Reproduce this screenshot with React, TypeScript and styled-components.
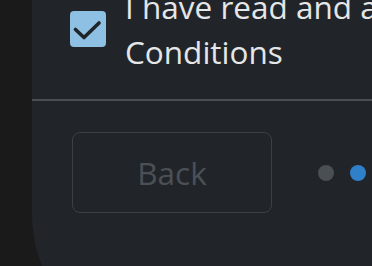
import styled, { createGlobalStyle } from "styled-components";
import { useState } from "react";

const Global = createGlobalStyle`
    html, body {
        margin: 0;
        background: #1a1a1a;
        overflow: hidden;
        font-family: "Open Sans", "Noto Sans", sans-serif;
    }
`

const Page = styled.div`
    padding-left: 32px;
    height: 266px;
    overflow: hidden;
`

const Panel = styled.div`
    width: 720px;
    height: 390px;
    margin-top: -40px;
    padding-top: 24px;
    box-sizing: border-box;
    background: #212529;
    border-bottom-left-radius: 135px;
`

const AgreeRow = styled.label`
    display: flex;
    align-items: center;
    gap: 19px;
    padding-left: 38px;
    cursor: pointer;
`

const Box = styled.span<{ $checked: boolean }>`
    flex: none;
    width: 36px;
    height: 36px;
    border-radius: 4px;
    background: ${p => p.$checked ? "#8ec0e4" : "transparent"};
    border: ${p => p.$checked ? "none" : "2px solid #8ec0e4"};
    box-sizing: border-box;
    display: flex;
    align-items: center;
    justify-content: center;
`

const AgreeText = styled.span`
    width: 580px;
    font-size: 31.5px;
    line-height: 45px;
    color: #e4e6e8;
`

const Divider = styled.hr`
    margin: 25px 0 0;
    border: none;
    height: 2px;
    background: #4a4f54;
`

const Footer = styled.div`
    display: flex;
    align-items: center;
    padding: 31px 0 0 40px;
`

const BackButton = styled.button`
    width: 200px;
    height: 81px;
    box-sizing: border-box;
    border: 1px solid #3b4046;
    border-radius: 8px;
    background: transparent;
    color: #4b5056;
    font-family: inherit;
    font-size: 31.5px;
    padding: 0;
`

const Dots = styled.div`
    display: flex;
    gap: 16px;
    margin-left: 46px;
`

const Dot = styled.span<{ $active?: boolean }>`
    width: 16px;
    height: 16px;
    border-radius: 50%;
    background: ${p => p.$active ? "#2f7fc9" : "#4a4f54"};
`

export default function App() {
    const [checked, setChecked] = useState(true)

    return (
        <Page>
            <Global />
            <Panel>
                <AgreeRow onClick={() => setChecked(!checked)}>
                    <Box $checked={checked}>
                        {checked &&
                            <svg width="36" height="36" viewBox="0 0 36 36">
                                <path d="M5.5 18.5 L14 26.5 L29 12" fill="none" stroke="#1f2428"
                                      strokeWidth="3.6" strokeLinecap="round" strokeLinejoin="round" />
                            </svg>
                        }
                    </Box>
                    <AgreeText>I have read and agree to the Terms and Conditions</AgreeText>
                </AgreeRow>
                <Divider />
                <Footer>
                    <BackButton disabled>Back</BackButton>
                    <Dots>
                        <Dot />
                        <Dot $active />
                        <Dot />
                    </Dots>
                </Footer>
            </Panel>
        </Page>
    )
}
